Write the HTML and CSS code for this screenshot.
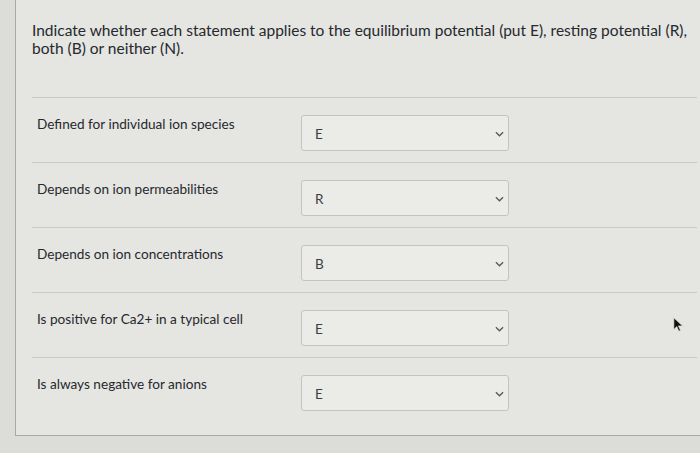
FILE: index.html
```html
<!DOCTYPE html>
<html lang="en">
<head>
	<meta charset="utf-8">
	<title>Matching question</title>
	<link rel="stylesheet" href="styles.css">
</head>
<body>
	<div class="quiz">
		<p class="prompt">Indicate whether each statement applies to the equilibrium potential (put E), resting potential (R), both (B) or neither (N).</p>
		<div class="answers">
			<div class="row">
				<span class="label">Defined for individual ion species</span>
				<div class="select"><span>E</span><svg viewBox="0 0 10 6" width="9" height="6"><path d="M1 1l4 4 4-4" fill="none" stroke="#5a5a5a" stroke-width="1.5"/></svg></div>
			</div>
			<div class="row">
				<span class="label">Depends on ion permeabilities</span>
				<div class="select"><span>R</span><svg viewBox="0 0 10 6" width="9" height="6"><path d="M1 1l4 4 4-4" fill="none" stroke="#5a5a5a" stroke-width="1.5"/></svg></div>
			</div>
			<div class="row">
				<span class="label">Depends on ion concentrations</span>
				<div class="select"><span>B</span><svg viewBox="0 0 10 6" width="9" height="6"><path d="M1 1l4 4 4-4" fill="none" stroke="#5a5a5a" stroke-width="1.5"/></svg></div>
			</div>
			<div class="row">
				<span class="label">Is positive for Ca2+ in a typical cell</span>
				<div class="select"><span>E</span><svg viewBox="0 0 10 6" width="9" height="6"><path d="M1 1l4 4 4-4" fill="none" stroke="#5a5a5a" stroke-width="1.5"/></svg></div>
			</div>
			<div class="row last">
				<span class="label">Is always negative for anions</span>
				<div class="select"><span>E</span><svg viewBox="0 0 10 6" width="9" height="6"><path d="M1 1l4 4 4-4" fill="none" stroke="#5a5a5a" stroke-width="1.5"/></svg></div>
			</div>
		</div>
		<svg class="pointer" viewBox="0 0 12 18" width="10" height="15"><path d="M1 1v14l3.5-3.5 2.5 5.5 2-1-2.5-5.3h5z" fill="#111" stroke="#e4e4e1" stroke-width="0.8"/></svg>
	</div>
</body>
</html>
```
FILE: styles.css
```css
body {
	margin: 0;
	background: #dcdcd9;
	font-family: Lato, "Liberation Sans", sans-serif;
	color: #26292d;
}

.quiz {
	position: relative;
	margin-left: 15px;
	height: 436px;
	box-sizing: border-box;
	background: #e5e5e2;
	border-left: 1px solid #a8a8a5;
	border-bottom: 1px solid #a8a8a5;
	padding: 21px 3px 0 16px;
}

.prompt {
	margin: 0;
	font-size: 15.5px;
	line-height: 18px;
	padding-right: 4px;
}

.answers {
	margin-top: 40px;
	border-top: 1px solid #c9c9c6;
}

.row {
	display: flex;
	align-items: flex-start;
	height: 65px;
	box-sizing: border-box;
	padding: 17px 0 0 5px;
	border-bottom: 1px solid #c9c9c6;
}

.row.last {
	border-bottom: none;
}

.label {
	width: 264px;
	font-size: 13.6px;
	line-height: 18px;
}

.select {
	display: flex;
	align-items: center;
	justify-content: space-between;
	box-sizing: border-box;
	width: 208px;
	height: 36px;
	padding: 2px 4px 0 13px;
	background: #ebebe8;
	border: 1px solid #c3c3c0;
	border-radius: 3px;
	font-size: 13.5px;
	color: #3a3e42;
}

.pointer {
	position: absolute;
	left: 657px;
	top: 317px;
}
```
